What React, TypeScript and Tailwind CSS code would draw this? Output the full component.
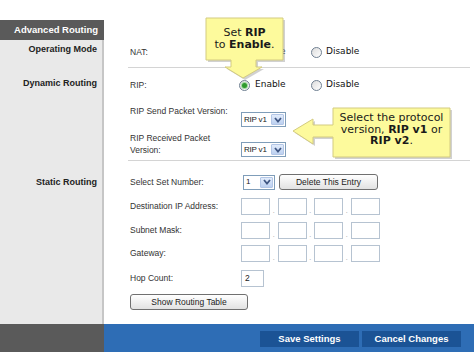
const labelFont = "font-['Liberation_Sans',Arial,sans-serif]";

const Radio = ({ checked = false }: { checked?: boolean }) => (
  <span className="w-[11px] h-[11px] rounded-full border border-[#6f7f91] bg-gradient-to-br from-[#dcdcdc] to-white flex items-center justify-center shrink-0">
    {checked && <span className="w-[5px] h-[5px] rounded-full bg-[#2f9a2f] ring-1 ring-[#9fd89f]" />}
  </span>
);

const RadioPair = ({ enabled }: { enabled: boolean }) => (
  <div className="flex items-center font-['DejaVu_Sans',Verdana,sans-serif] text-[9px] text-[#111]">
    <div className="w-[72px] flex items-center gap-[5px]">
      <Radio checked={enabled} />
      <span>Enable</span>
    </div>
    <div className="flex items-center gap-[4px]">
      <Radio checked={false} />
      <span>Disable</span>
    </div>
  </div>
);

const Chevron = () => (
  <svg width="8" height="6" viewBox="0 0 8 6">
    <path d="M1 1 L4 4.5 L7 1" fill="none" stroke="#3f5683" strokeWidth="1.8" />
  </svg>
);

const Select = ({ value, width }: { value: string; width: string }) => (
  <div className={`${width} h-[15px] border border-[#7f9db9] bg-white flex items-center justify-between pl-[2px] pr-[1px] text-[8px] text-[#222] whitespace-nowrap`}>
    <span className="shrink-0 tracking-[-0.2px]">{value}</span>
    <span className="w-[13px] h-[11px] shrink-0 bg-gradient-to-b from-[#e2ecfb] to-[#bcd0f0] border border-[#b3c6e6] rounded-[1px] flex items-center justify-center">
      <Chevron />
    </span>
  </div>
);

const Button = ({ label, width }: { label: string; width: string }) => (
  <div className={`${width} h-[16px] rounded-[3px] border border-[#707070] bg-gradient-to-b from-white to-[#e2e2e2] flex items-center justify-center text-[8.5px] text-[#222] whitespace-nowrap`}>
    {label}
  </div>
);

const Box = ({ value = "", width = "w-[29px]" }: { value?: string; width?: string }) => (
  <div className={`${width} h-[17px] border border-[#b6c3d1] bg-white flex items-center pl-[3px] text-[8.5px] text-[#222]`}>
    {value}
  </div>
);

const Dot = () => <span className="w-[7.5px] text-center text-[7px] leading-[8px] text-[#999]">.</span>;

const IpRow = () => (
  <div className="flex items-end">
    <Box />
    <Dot />
    <Box />
    <Dot />
    <Box />
    <Dot />
    <Box />
  </div>
);

const Side = ({ label, pad }: { label: string; pad: string }) => (
  <div className={`w-[104px] shrink-0 bg-[#e9e9e9] border-r-2 border-[#c6c6c6] text-right pr-[5px] ${pad} text-[9px] leading-[12px] font-bold text-[#222]`}>
    {label}
  </div>
);

export default function App() {
  return (
    <div className={`relative w-[474px] h-[352px] bg-white overflow-hidden ${labelFont}`}>
      <div className="h-[20px]" />
      <div className="flex h-[20px]">
        <div className="w-[104px] bg-[#5a5a5a] text-white font-bold text-[9.5px] flex items-center justify-end pr-[6px]">
          Advanced Routing
        </div>
      </div>

      {/* Operating mode */}
      <div className="flex">
        <Side label="Operating Mode" pad="pt-[3px]" />
        <div className="flex-1 pl-[24px] pr-[4px]">
          <div className="h-[28px] border-b border-[#d4d4d4] pl-[2px] pt-[1px] text-[8.5px] text-[#333]">
            <div className="flex items-center h-[22px]">
              <span className="w-[109px]">NAT:</span>
              <RadioPair enabled={false} />
            </div>
          </div>
        </div>
      </div>

      {/* Dynamic routing */}
      <div className="flex">
        <Side label="Dynamic Routing" pad="pt-[9px]" />
        <div className="flex-1 pl-[24px] pr-[4px]">
          <div className="h-[93px] border-b border-[#d4d4d4] pl-[2px] pt-[8px] text-[8.5px] text-[#333]">
            <div className="flex items-center h-[18px]">
              <span className="w-[109px]">RIP:</span>
              <RadioPair enabled={true} />
            </div>
            <div className="flex items-start mt-[11px]">
              <span className="w-[111px] leading-[12px]">RIP Send Packet Version:</span>
              <div className="mt-[7px]">
                <Select value="RIP v1" width="w-[45px]" />
              </div>
            </div>
            <div className="flex items-start mt-[5px]">
              <span className="w-[111px] leading-[12px]">
                RIP Received Packet
                <br />
                Version:
              </span>
              <div className="mt-[10px]">
                <Select value="RIP v1" width="w-[45px]" />
              </div>
            </div>
          </div>
        </div>
      </div>

      {/* Static routing */}
      <div className="flex">
        <Side label="Static Routing" pad="pt-[15px]" />
        <div className="flex-1 pl-[24px] pr-[4px]">
          <div className="h-[163px] pl-[2px] pt-[13px] text-[8.5px] text-[#333]">
            <div className="flex items-center h-[16px]">
              <span className="w-[113px]">Select Set Number:</span>
              <Select value="1" width="w-[32px]" />
              <div className="ml-[4px]">
                <Button label="Delete This Entry" width="w-[99px]" />
              </div>
            </div>
            <div className="flex items-center h-[17px] mt-[8px]">
              <span className="w-[111px]">Destination IP Address:</span>
              <IpRow />
            </div>
            <div className="flex items-center h-[17px] mt-[7px]">
              <span className="w-[111px]">Subnet Mask:</span>
              <IpRow />
            </div>
            <div className="flex items-center h-[17px] mt-[6px]">
              <span className="w-[111px]">Gateway:</span>
              <IpRow />
            </div>
            <div className="flex items-center h-[18px] mt-[7px]">
              <span className="w-[111px]">Hop Count:</span>
              <Box value="2" width="w-[23px]" />
            </div>
            <div className="mt-[7px]">
              <Button label="Show Routing Table" width="w-[118px]" />
            </div>
          </div>
        </div>
      </div>

      {/* Footer */}
      <div className="flex h-[28px]">
        <div className="w-[104px] bg-[#5a5a5a]" />
        <div className="flex-1 bg-[#2e6db5] flex justify-end items-start pt-[7px] pr-[13px] gap-[3px]">
          <div className="w-[99px] h-[16px] bg-[#1b5395] text-white font-bold text-[9.5px] flex items-center justify-center">
            Save Settings
          </div>
          <div className="w-[99px] h-[16px] bg-[#1b5395] text-white font-bold text-[9.5px] flex items-center justify-center">
            Cancel Changes
          </div>
        </div>
      </div>

      {/* Callouts */}
      <svg className="absolute left-0 top-0" width="474" height="352" viewBox="0 0 474 352">
        <path
          d="M208,20 H285 V62 H258 V69 H264 L245,80 L227,69 H233 V62 H208 Z"
          fill="#9a9a9a"
          opacity="0.45"
        />
        <path
          d="M206,18 H283 V60 H256 V67 H262 L243,78 L225,67 H231 V60 H206 Z"
          fill="#fdfa9c"
          stroke="#d3cb80"
          strokeWidth="1"
        />
        <path
          d="M335,110 H452 V159 H335 V139 H315 V146 L295,133 L315,121 V127 H335 Z"
          fill="#9a9a9a"
          opacity="0.45"
        />
        <path
          d="M333,108 H450 V157 H333 V137 H313 V144 L293,131 L313,119 V125 H333 Z"
          fill="#fdfa9c"
          stroke="#d3cb80"
          strokeWidth="1"
        />
      </svg>
      <div className="absolute left-[206px] top-[27px] w-[77px] text-center font-['DejaVu_Sans',Verdana,sans-serif] text-[11px] leading-[12px] text-[#1a1a1a]">
        Set <b>RIP</b>
        <br />
        to <b>Enable</b>.
      </div>
      <div className="absolute left-[333px] top-[112px] w-[117px] text-center font-['DejaVu_Sans',Verdana,sans-serif] text-[11px] leading-[11.5px] text-[#1a1a1a]">
        Select the protocol
        <br />
        version, <b>RIP v1</b> or
        <br />
        <b>RIP v2</b>.
      </div>
    </div>
  );
}
